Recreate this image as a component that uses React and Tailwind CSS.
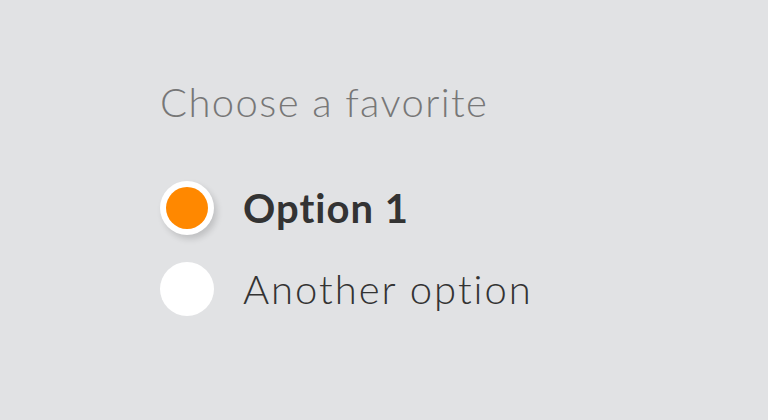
import React, { useState } from "react";

const options = ["Option 1", "Another option"];

const App = () => {
  const [selected, setSelected] = useState(0);

  return (
    <div className="w-[768px] h-[420px] bg-[#e1e2e4] pl-[160px] pt-[80px] font-['Lato',sans-serif]">
      <h2 className="text-[40px] leading-[44px] font-light tracking-[1.4px] text-[#777777]">
        Choose a favorite
      </h2>
      <div className="flex flex-col gap-[27px] mt-[57px]">
        {options.map((option, i) => (
          <label
            key={option}
            onClick={() => setSelected(i)}
            className="flex items-center gap-[29px] cursor-pointer"
          >
            <span
              className={`w-[54px] h-[54px] rounded-full bg-white flex items-center justify-center ${
                selected === i ? "shadow-[3px_4px_6px_rgba(0,0,0,0.15)]" : ""
              }`}
            >
              {selected === i && (
                <span className="w-[42px] h-[42px] rounded-full bg-[#ff8800]" />
              )}
            </span>
            <span
              className={`text-[40px] leading-[54px] text-[#333333] ${
                selected === i
                  ? "font-bold tracking-[1px]"
                  : "font-light tracking-[2px]"
              }`}
            >
              {option}
            </span>
          </label>
        ))}
      </div>
    </div>
  );
};

export default App;
